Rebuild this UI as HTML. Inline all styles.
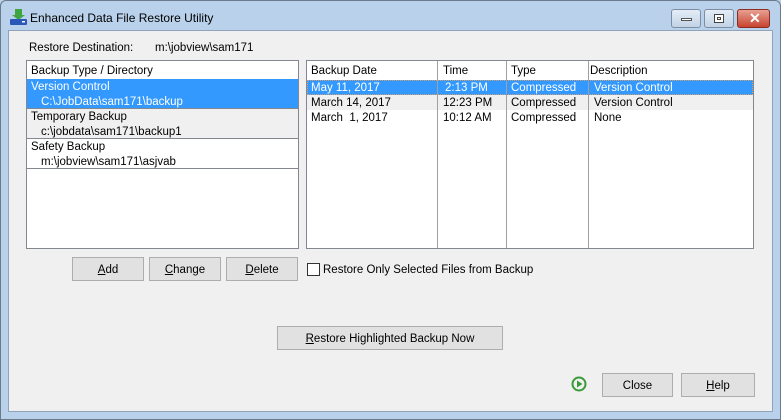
<!DOCTYPE html>
<html><head><meta charset="utf-8"><style>
*{margin:0;padding:0;box-sizing:border-box}
body{width:781px;height:420px;overflow:hidden;font-family:"Liberation Sans",sans-serif;font-size:11.5px;line-height:16px;color:#000;background:#fff;position:relative}
.win{position:absolute;left:0;top:0;width:781px;height:420px;background:#b9d1ea}
.frame{position:absolute;left:0;top:0;width:781px;height:420px;border:1px solid #6a7a8a;border-radius:6px 6px 0 0;pointer-events:none}
.client{position:absolute;left:8px;top:30px;width:765px;height:382px;background:#f0f0f0;border:1px solid #8fa4bb}
.a{position:absolute;white-space:nowrap}
.list{position:absolute;background:#fff;border:1px solid #828790}
.btn{position:absolute;background:#e1e1e1;border:1px solid #adadad;text-align:center;line-height:24px}
.tb{position:absolute;top:9px;height:19px;border:1px solid #7d8ea4;border-radius:3px;background:linear-gradient(#e4edf7,#c2d3e6)}
u{text-decoration:underline}
</style></head><body>
<div class="win">
  <svg class="a" style="left:10px;top:9px" width="17" height="16" viewBox="0 0 17 16"><path d="M5 0h7v6h3l-6.5 5L2 6h3z" fill="#3da641"/><rect x="0" y="10" width="17" height="6" rx="1" fill="#2b58b8"/><rect x="12" y="12" width="3" height="1.5" fill="#fff"/></svg>
  <div class="a" style="left:30px;top:10px;font-size:12px">Enhanced Data File Restore Utility</div>
  <div class="tb" style="left:671px;width:30px"><div class="a" style="left:9px;top:8px;width:11px;height:3px;background:#fff;border:1px solid #555"></div></div>
  <div class="tb" style="left:704px;width:30px"><div class="a" style="left:9px;top:4px;width:10px;height:9px;border:1px solid #444;background:#fff"></div><div class="a" style="left:12px;top:7px;width:4px;height:3px;border:1px solid #444"></div></div>
  <div class="tb" style="left:737px;width:33px;border-color:#8b2e22;background:linear-gradient(#e8a093,#c7432f)"><div class="a" style="left:11px;top:0px;color:#fff;font-weight:bold;font-size:14px">✕</div></div>
  <div class="client"></div>
  <div class="a" style="left:29px;top:40px">Restore Destination:</div>
  <div class="a" style="left:155px;top:40px">m:\jobview\sam171</div>

  <div class="list" style="left:26px;top:60px;width:273px;height:189px">
    <div class="a" style="left:4px;top:2px">Backup Type / Directory</div>
    <div class="a" style="left:0;top:18px;width:271px;height:30px;background:#3399ff;color:#fff;border-bottom:1px solid #828790"><div class="a" style="left:4px;top:0px">Version Control</div><div class="a" style="left:14px;top:15px">C:\JobData\sam171\backup</div></div>
    <div class="a" style="left:0;top:48px;width:271px;height:30px;background:#f0f0f0;border-bottom:1px solid #828790"><div class="a" style="left:4px;top:0px">Temporary Backup</div><div class="a" style="left:14px;top:15px">c:\jobdata\sam171\backup1</div></div>
    <div class="a" style="left:0;top:78px;width:271px;height:30px;border-bottom:1px solid #828790"><div class="a" style="left:4px;top:0px">Safety Backup</div><div class="a" style="left:14px;top:15px">m:\jobview\sam171\asjvab</div></div>
  </div>

  <div class="list" style="left:306px;top:60px;width:448px;height:189px">
    <div class="a" style="left:0;top:19px;width:446px;height:15px;background:#3399ff;border:1px dotted #d0a070"></div>
    <div class="a" style="left:0;top:34px;width:446px;height:15px;background:#f0f0f0"></div>
    <div class="a" style="left:130px;top:0;width:1px;height:187px;background:#a0a0a0"></div>
    <div class="a" style="left:199px;top:0;width:1px;height:187px;background:#a0a0a0"></div>
    <div class="a" style="left:281px;top:0;width:1px;height:187px;background:#a0a0a0"></div>
    <div class="a" style="left:4px;top:2px">Backup Date</div>
    <div class="a" style="left:136px;top:2px">Time</div>
    <div class="a" style="left:204px;top:2px">Type</div>
    <div class="a" style="left:283px;top:2px">Description</div>
    <div class="a" style="left:4px;top:19px;color:#fff">May 11, 2017</div>
    <div class="a" style="left:138px;top:19px;color:#fff">2:13 PM</div>
    <div class="a" style="left:204px;top:19px;color:#fff">Compressed</div>
    <div class="a" style="left:287px;top:19px;color:#fff">Version Control</div>
    <div class="a" style="left:4px;top:34px">March 14, 2017</div>
    <div class="a" style="left:136px;top:34px">12:23 PM</div>
    <div class="a" style="left:204px;top:34px">Compressed</div>
    <div class="a" style="left:287px;top:34px">Version Control</div>
    <div class="a" style="left:4px;top:49px">March &nbsp;1, 2017</div>
    <div class="a" style="left:136px;top:49px">10:12 AM</div>
    <div class="a" style="left:204px;top:49px">Compressed</div>
    <div class="a" style="left:287px;top:49px">None</div>
  </div>

  <div class="btn" style="left:72px;top:257px;width:72px;height:24px"><u>A</u>dd</div>
  <div class="btn" style="left:149px;top:257px;width:72px;height:24px"><u>C</u>hange</div>
  <div class="btn" style="left:226px;top:257px;width:72px;height:24px"><u>D</u>elete</div>
  <div class="a" style="left:307px;top:263px;width:13px;height:13px;background:#fff;border:1px solid #333"></div>
  <div class="a" style="left:323px;top:262px">Restore Only Selected Files from Backup</div>

  <div class="btn" style="left:277px;top:326px;width:226px;height:24px"><u>R</u>estore Highlighted Backup Now</div>

  <svg class="a" style="left:571px;top:376px" width="16" height="16" viewBox="0 0 16 16"><circle cx="8" cy="8" r="6.5" fill="none" stroke="#3a9a3a" stroke-width="2"/><path d="M6 4.5v7l5.5-3.5z" fill="#3a9a3a"/></svg>
  <div class="btn" style="left:602px;top:373px;width:71px;height:24px">Close</div>
  <div class="btn" style="left:681px;top:373px;width:74px;height:24px"><u>H</u>elp</div>
</div>
<div class="frame"></div>
</body></html>
